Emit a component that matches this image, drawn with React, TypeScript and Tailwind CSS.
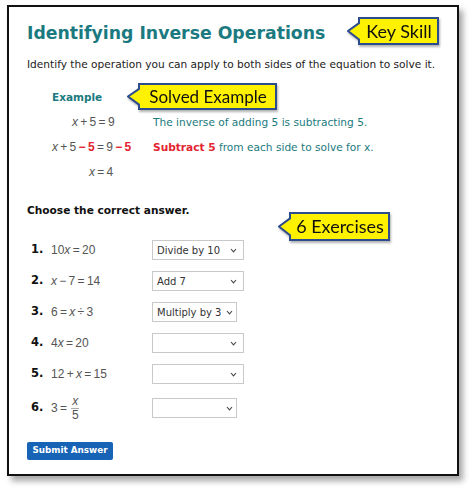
import React from 'react';

const TEAL = '#1b7a80';

interface CalloutProps {
  label: string;
  left: number;
  top: number;
  width: number;
  height: number;
  size: number;
}

// Yellow sticky label with a notch pointing left
function Callout({ label, left, top, width, height, size }: CalloutProps) {
  const notch = 12;
  const d = `M ${notch} 1 H ${width - 1} V ${height - 1} H ${notch} V ${height * 0.8} L 1 ${height / 2} L ${notch} ${height * 0.22} Z`;
  return (
    <div
      className="absolute z-10 drop-shadow-[1px_2px_1px_rgba(0,0,0,0.3)]"
      style={{ left, top, width, height }}
    >
      <svg width={width} height={height} className="absolute inset-0">
        <path d={d} fill="#fff200" stroke="#2d4c8e" strokeWidth={2} strokeLinejoin="miter" />
      </svg>
      <div
        className="absolute inset-y-0 right-0 flex items-center justify-center text-[#111] font-['Lato',sans-serif]"
        style={{ left: notch, fontSize: size }}
      >
        {label}
      </div>
    </div>
  );
}

function X() {
  return <span className="italic">x</span>;
}

// operator with a bit of math spacing either side
function Op({ children, red }: { children: React.ReactNode; red?: boolean }) {
  return <span className={`mx-[2.3px] ${red ? 'font-bold text-[#e3232f]' : ''}`}>{children}</span>;
}

function Chevron() {
  return (
    <svg width="7" height="5" viewBox="0 0 7 5" className="pointer-events-none shrink-0">
      <path d="M1 1 L3.5 3.8 L6 1" fill="none" stroke="#444" strokeWidth="1.1" />
    </svg>
  );
}

function Answer({ value, wide }: { value: string; wide: boolean }) {
  return (
    <div
      className={`flex h-[20px] items-center justify-between border border-[#c9c9c9] bg-white pl-[4px] text-[10px] text-[#333] ${
        wide ? 'w-[92px] pr-[6px]' : 'w-[85px] pr-[3px]'
      }`}
    >
      <span className="whitespace-nowrap">{value}</span>
      <Chevron />
    </div>
  );
}

const exercises: { n: number; eq: React.ReactNode; value: string; wide: boolean }[] = [
  { n: 1, eq: <>10<X /><Op>=</Op>20</>, value: 'Divide by 10', wide: true },
  { n: 2, eq: <><X /><Op>−</Op>7<Op>=</Op>14</>, value: 'Add 7', wide: true },
  { n: 3, eq: <>6<Op>=</Op><X /><Op>÷</Op>3</>, value: 'Multiply by 3', wide: false },
  { n: 4, eq: <>4<X /><Op>=</Op>20</>, value: '', wide: true },
  { n: 5, eq: <>12<Op>+</Op><X /><Op>=</Op>15</>, value: '', wide: true },
];

const mathFont = "font-['Liberation_Sans',sans-serif] text-[12px] text-[#555]";

export default function App() {
  return (
    <div className="min-h-[489px] w-[474px] bg-white pl-[7px] pt-[5px] font-['DejaVu_Sans',sans-serif]">
      <div className="relative h-[471px] w-[452px] border-2 border-[#111] bg-white shadow-[4px_5px_6px_rgba(0,0,0,0.35)]">
        <Callout label="Key Skill" left={338} top={10} width={92} height={28} size={18} />
        <Callout label="Solved Example" left={118} top={76} width={150} height={27} size={17} />
        <Callout label="6 Exercises" left={269} top={205} width={112} height={29} size={18} />

        <div className="pl-[18px] pt-[14px]">
          <h1 className="text-[17.3px] font-bold leading-[24px]" style={{ color: TEAL }}>
            Identifying Inverse Operations
          </h1>
          <p className="mt-[12px] text-[10.6px] leading-[14px] text-[#222]">
            Identify the operation you can apply to both sides of the equation to solve it.
          </p>

          {/* Worked example */}
          <div className="mt-[19px] pl-[25px]">
            <div className="text-[10.5px] font-bold leading-[14px]" style={{ color: TEAL }}>
              Example
            </div>
            <div className="mt-[11px] grid grid-cols-[101px_1fr] items-center gap-y-[11px] text-[10.6px] leading-[14px]">
              <div className={`pl-[20px] ${mathFont}`}>
                <X /><Op>+</Op>5<Op>=</Op>9
              </div>
              <div style={{ color: TEAL }}>The inverse of adding 5 is subtracting 5.</div>
              <div className={`whitespace-nowrap ${mathFont}`}>
                <X /><Op>+</Op>5<Op red>−</Op><span className="font-bold text-[#e3232f]">5</span><Op>=</Op>9<Op red>−</Op><span className="font-bold text-[#e3232f]">5</span>
              </div>
              <div style={{ color: TEAL }}>
                <span className="font-bold text-[#e3232f]">Subtract 5</span> from each side to solve for x.
              </div>
              <div className={`pl-[37px] ${mathFont}`}>
                <X /><Op>=</Op>4
              </div>
              <div />
            </div>
          </div>

          {/* Exercises */}
          <div className="mt-[24px] text-[10.6px] font-bold leading-[15px] text-[#111]">Choose the correct answer.</div>
          <div className="mt-[22px] flex flex-col gap-[11px] pl-[4px]">
            {exercises.map(e => (
              <div key={e.n} className="flex h-[20px] items-center">
                <span className="w-[20px] text-[11.5px] font-bold text-[#111]">{e.n}.</span>
                <span className={`w-[101px] ${mathFont}`}>{e.eq}</span>
                <Answer value={e.value} wide={e.wide} />
              </div>
            ))}
            <div className="flex h-[26px] items-center">
              <span className="w-[20px] text-[11.5px] font-bold text-[#111]">6.</span>
              <span className={`flex w-[101px] items-center ${mathFont}`}>
                3<Op>=</Op>
                <span className="ml-[2px] inline-flex flex-col items-center leading-[13px]">
                  <X />
                  <span className="h-px w-[8px] bg-[#aaa]" />
                  <span>5</span>
                </span>
              </span>
              <Answer value="" wide={false} />
            </div>
          </div>

          <button className="mt-[21px] h-[18px] w-[86px] rounded-[2px] bg-[#1763b6] text-[8.8px] font-bold text-white">
            Submit Answer
          </button>
        </div>
      </div>
    </div>
  );
}
